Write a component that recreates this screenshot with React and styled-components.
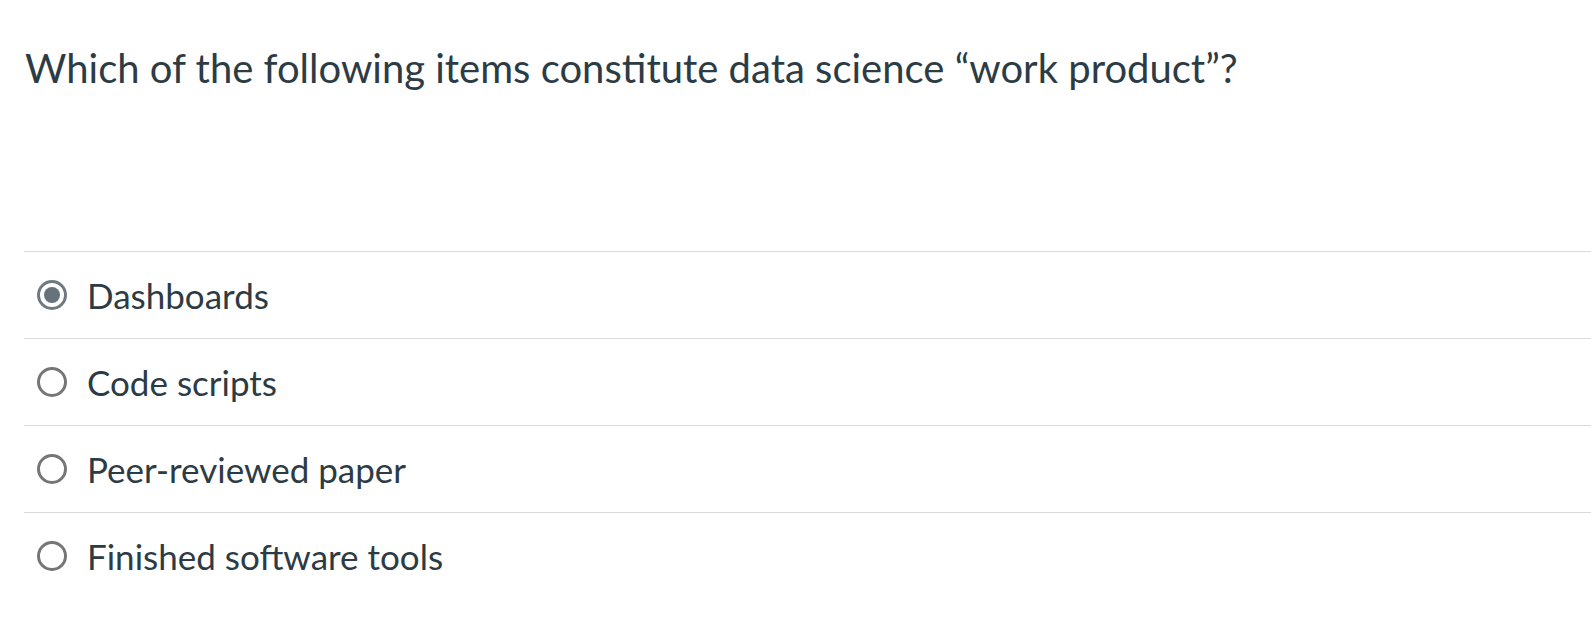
import React, { useState } from "react";
import styled, { createGlobalStyle } from "styled-components";

const GlobalStyle = createGlobalStyle`
    html, body {
        margin: 0;
        padding: 0;
        background: #ffffff;
        font-family: Lato, "Liberation Sans", sans-serif;
        color: #2d3b45;
    }
`;

const Page = styled.div`
    padding: 40px 0 0 24px;
`;

const Question = styled.h1`
    margin: 0 0 0 1px;
    font-size: 40px;
    font-weight: 400;
    line-height: 56px;
    color: #2d3b45;
`;

const Answers = styled.div`
    margin-top: 155px;
`;

const Row = styled.label`
    display: flex;
    align-items: center;
    height: 86px;
    border-top: 1px solid #d9d9d9;
    cursor: pointer;
`;

const Radio = styled.span`
    box-sizing: border-box;
    width: 30px;
    height: 30px;
    margin-left: 13px;
    border-radius: 50%;
    border: 3px solid ${(p) => (p.$checked ? "#6f7a80" : "#767676")};
    display: flex;
    align-items: center;
    justify-content: center;

    &::after {
        content: "";
        width: 16px;
        height: 16px;
        border-radius: 50%;
        background: ${(p) => (p.$checked ? "#66737a" : "transparent")};
    }
`;

const Label = styled.span`
    margin-left: 20px;
    font-size: 35px;
    color: #2d3b45;
`;

const options = [
    "Dashboards",
    "Code scripts",
    "Peer-reviewed paper",
    "Finished software tools",
];

const App = () => {
    const [selected, setSelected] = useState(0);

    return (
        <Page>
            <GlobalStyle />
            <Question>Which of the following items constitute data science “work product”?</Question>
            <Answers>
                {options.map((text, i) => (
                    <Row key={text} onClick={() => setSelected(i)}>
                        <Radio $checked={selected === i} />
                        <Label>{text}</Label>
                    </Row>
                ))}
            </Answers>
        </Page>
    );
};

export default App;
